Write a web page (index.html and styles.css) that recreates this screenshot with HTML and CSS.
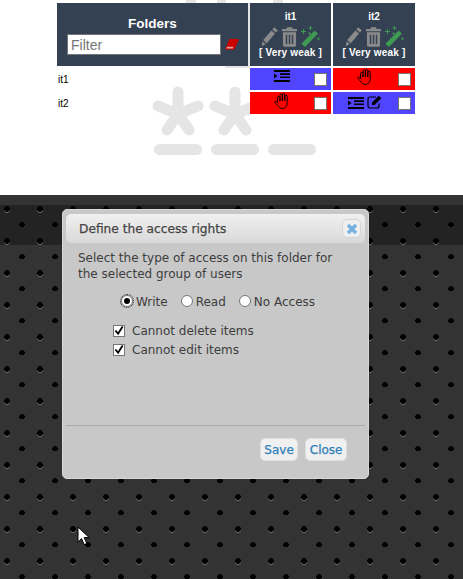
FILE: index.html
```html
<!DOCTYPE html>
<html lang="en">
<head>
<meta charset="utf-8">
<title>Define the access rights</title>
<link rel="stylesheet" href="styles.css">
</head>
<body>
<svg class="defs" width="0" height="0" aria-hidden="true">
  <symbol id="i-indent" viewBox="0 0 16 12">
    <path d="M0 0h16v2H0zM6 3.300h10v1.700H6zM6 6.400h10v1.700H6zM0 10h16v2H0zM0 3.500l3.600 2.600L0 8.600z" fill="#000"/>
  </symbol>
  <symbol id="i-hand" viewBox="0 0 16 16">
    <path d="M3.600 9.500V4.400a1.200 1.200 0 0 1 2.400 0V7.500M6 7.500V2.300a1.200 1.200 0 0 1 2.400 0V7.500M8.400 7.500V1.700a1.200 1.200 0 0 1 2.400 0V7.500M10.800 7.500V3.400a1.200 1.200 0 0 1 2.400 0v6.200c0 3.400-1.800 5.900-4.800 5.900-2.400 0-3.400-1.200-4.300-2.700L.9 9.600c-.6-1 .8-2.100 1.700-1.200l1 1.100" fill="none" stroke="#000" stroke-width=".95" stroke-linecap="round" stroke-linejoin="round"/>
  </symbol>
  <symbol id="i-edit" viewBox="0 0 16 14">
    <path d="M12 8.500V11a2 2 0 0 1-2 2H3a2 2 0 0 1-2-2V4a2 2 0 0 1 2-2h6" fill="none" stroke="#000" stroke-width="1.200"/>
    <path d="M5 7.500l6.800-6.800 2.600 2.600-6.800 6.800H5z" fill="#000"/>
  </symbol>
  <symbol id="i-pencil" viewBox="0 0 18 21">
    <path d="M13.200 1.200l3.600 3.200-1.900 2.200-3.600-3.200zM10.400 4.400l3.600 3.200-8.200 9.600-3.600-3.200zM1.500 15.200l3.200 2.800-4 2.200z" fill="#8a8a8a"/>
  </symbol>
  <symbol id="i-trash" viewBox="0 0 16 21">
    <path d="M5.500 0h5l1 2H16v2.400H0V2h4.500zM1 5.400h14V19a2 2 0 0 1-2 2H3a2 2 0 0 1-2-2zM4 8v10h1.600V8zM7.200 8v10h1.600V8zM10.400 8v10H12V8z" fill="#8a8a8a" fill-rule="evenodd"/>
  </symbol>
  <symbol id="i-wand" viewBox="0 0 20 21">
    <path d="M14.600 4.500l3.400 3L5 21l-3.600-3.200z" fill="#3f9a52"/>
    <path d="M3 3h1v2h2v1H4v2H3V6H1V5h2zM10 0h1v1.500h1.500v1H11V4h-1V2.500H8.500v-1H10zM18 11h.8v1.400h1.200v.8h-1.200v1.400H18v-1.400h-1.200v-.8H18zM9 6h.8v1h1v.8h-1v1H9v-1H8V7h1z" fill="#3f9a52"/>
  </symbol>
</svg>

<section class="rights">
  <svg class="watermark" width="463" height="195" viewBox="0 0 463 195" aria-hidden="true">
    <g fill="#e5e5e5">
      <rect x="186" y="0" width="10" height="4"/>
      <rect x="217" y="0" width="9" height="4"/>
      <rect x="273" y="0" width="10" height="4"/>
      <rect x="248" y="3" width="2" height="64"/>
      <rect x="225" y="66" width="25" height="2"/>
    </g>
    <g fill="none" stroke="#e5e5e5" stroke-linecap="round" stroke-width="11">
      <path d="M178 92v22M158 106l20 8 20-8M167 130l11-16 11 16"/>
      <path d="M235 92v22M215 106l20 8 20-8M224 130l11-16 11 16"/>
    </g>
    <g fill="#e5e5e5">
      <rect x="154" y="144" width="48" height="11" rx="5.500"/>
      <rect x="211" y="144" width="48" height="11" rx="5.500"/>
      <rect x="268" y="144" width="48" height="11" rx="5.500"/>
    </g>
  </svg>

  <div class="matrix">
    <div class="head head-main">
      <div class="head-title">Folders</div>
      <div class="filter-row">
        <input class="filter" type="text" placeholder="Filter">
        <svg class="eraser" width="14" height="11" viewBox="0 0 14 11" aria-hidden="true">
          <path d="M4.500 0H14L9.500 10.500H0z" fill="#cc0000"/>
          <path d="M2 7.800h6.400L7.800 9.400H1.400z" fill="#e8a0a0"/>
        </svg>
      </div>
    </div>
    <div class="head head-user">
      <div class="user-name">it1</div>
      <div class="user-icons">
        <svg class="ic-pencil"><use href="#i-pencil"/></svg>
        <svg class="ic-trash"><use href="#i-trash"/></svg>
        <svg class="ic-wand"><use href="#i-wand"/></svg>
      </div>
      <div class="strength">[ Very weak ]</div>
    </div>
    <div class="head head-user">
      <div class="user-name">it2</div>
      <div class="user-icons">
        <svg class="ic-pencil"><use href="#i-pencil"/></svg>
        <svg class="ic-trash"><use href="#i-trash"/></svg>
        <svg class="ic-wand"><use href="#i-wand"/></svg>
      </div>
      <div class="strength">[ Very weak ]</div>
    </div>

    <div class="row-label">it1</div>
    <div class="cell blue">
      <div class="cell-icons"><svg class="ic-indent"><use href="#i-indent"/></svg></div>
      <input class="cell-check" type="checkbox">
    </div>
    <div class="cell red">
      <div class="cell-icons"><svg class="ic-hand"><use href="#i-hand"/></svg></div>
      <input class="cell-check" type="checkbox">
    </div>

    <div class="row-label">it2</div>
    <div class="cell red">
      <div class="cell-icons"><svg class="ic-hand"><use href="#i-hand"/></svg></div>
      <input class="cell-check" type="checkbox">
    </div>
    <div class="cell blue">
      <div class="cell-icons low"><svg class="ic-indent"><use href="#i-indent"/></svg><svg class="ic-edit"><use href="#i-edit"/></svg></div>
      <input class="cell-check" type="checkbox">
    </div>
  </div>
</section>

<section class="overlay"></section>

<div class="modal" role="dialog">
  <div class="modal-bar">
    <span class="modal-title">Define the access rights</span>
    <span class="modal-x">
      <svg width="12" height="12" viewBox="0 0 12 12" aria-hidden="true"><path d="M2 2l8 8M10 2l-8 8" stroke="#74b2e2" stroke-width="3.400" fill="none"/></svg>
    </span>
  </div>
  <div class="modal-body">
    <p class="intro">Select the type of access on this folder for the selected group of users</p>
    <div class="radios">
      <label class="radio-item"><span class="radio on focus"></span>Write</label>
      <label class="radio-item"><span class="radio"></span>Read</label>
      <label class="radio-item"><span class="radio"></span>No Access</label>
    </div>
    <div class="checks">
      <label class="check-item"><span class="check"><svg width="11" height="11" viewBox="0 0 11 11" aria-hidden="true"><path d="M1.500 5.500l3 3.500 5-8" fill="none" stroke="#000" stroke-width="2"/></svg></span>Cannot delete items</label>
      <label class="check-item"><span class="check"><svg width="11" height="11" viewBox="0 0 11 11" aria-hidden="true"><path d="M1.500 5.500l3 3.500 5-8" fill="none" stroke="#000" stroke-width="2"/></svg></span>Cannot edit items</label>
    </div>
  </div>
  <div class="modal-foot">
    <button class="btn" type="button">Save</button>
    <button class="btn" type="button">Close</button>
  </div>
</div>

<svg class="pointer" width="14" height="20" viewBox="0 0 14 20" aria-hidden="true">
  <path d="M1 1v15l3.600-3.400 2.600 6 2.600-1.100-2.600-5.900h5z" fill="#fff" stroke="#000" stroke-width="1"/>
</svg>
</body>
</html>
```
FILE: styles.css
```css
* { box-sizing: border-box; }
html, body { margin: 0; padding: 0; }
body {
  width: 463px;
  height: 579px;
  overflow: hidden;
  position: relative;
  background: #fff;
  font-family: "Liberation Sans", Arial, sans-serif;
}
.defs { position: absolute; }

/* top: access matrix */
.rights {
  position: relative;
  height: 195px;
  padding: 3px 0 0 57px;
}
.watermark { position: absolute; left: 0; top: 0; }
.matrix {
  position: relative;
  display: grid;
  grid-template-columns: 191px 81px 82px;
  grid-template-rows: 63px 22px 22px;
  column-gap: 2px;
  row-gap: 2px;
}
.head { background: #344152; color: #fff; }
.head-main { padding: 14px 0 0 10px; }
.head-title {
  font-size: 13.500px;
  font-weight: bold;
  text-align: center;
  line-height: 14px;
  padding-right: 10px;
  margin-bottom: 3px;
}
.filter-row { display: flex; align-items: center; gap: 4px; }
.filter {
  width: 154px;
  height: 21px;
  border: 1px solid #767676;
  background: #fff;
  padding: 0 3px;
  font: 14px "Liberation Sans", Arial, sans-serif;
  border-radius: 0;
}
.filter::placeholder { color: #757575; opacity: 1; }
.head-user { display: flex; flex-direction: column; align-items: center; padding-top: 8px; }
.user-name { font-size: 10px; font-weight: bold; line-height: 11px; }
.user-icons { display: flex; align-items: center; height: 21px; margin-top: 4px; gap: 3px; }
.ic-pencil { width: 18px; height: 21px; }
.ic-trash { width: 15px; height: 20px; }
.ic-wand { width: 20px; height: 21px; }
.strength { font-size: 10px; font-weight: bold; line-height: 11px; letter-spacing: .2px; }
.row-label { font-size: 10px; line-height: 22px; padding: 1px 0 0 1px; color: #000; }
.cell { display: flex; align-items: center; padding-right: 4px; }
.blue { background: #5044ff; }
.red { background: #ff0000; }
.cell-icons { flex: 1; display: flex; justify-content: center; align-self: flex-start; padding: 1px 1px 0 0; gap: 3px; }
.cell-icons.low { padding-top: 4px; }
.ic-indent { width: 16px; height: 12px; margin-top: 1px; }
.ic-hand { width: 16px; height: 16px; }
.ic-edit { width: 16px; height: 14px; margin-top: -1px; }
.cell-check {
  appearance: none;
  -webkit-appearance: none;
  margin: 1px 0 0;
  width: 13px;
  height: 13px;
  background: #fff;
  border: 1.500px solid #767676;
}

/* bottom: dotted overlay */
.overlay {
  height: 384px;
  background-color: #333;
  background-image:
    radial-gradient(circle at 7px 14px, #000 2.600px, transparent 3.200px),
    radial-gradient(circle at 22px 30px, #000 2.600px, transparent 3.200px),
    radial-gradient(circle at 7px 15px, #6a6a6a 2.600px, transparent 3.200px),
    radial-gradient(circle at 22px 31px, #6a6a6a 2.600px, transparent 3.200px),
    linear-gradient(#232323, #232323);
  background-size: 33px 32px, 33px 32px, 33px 32px, 33px 32px, 100% 40px;
  background-position: 0 0, 0 0, 0 0, 0 0, 0 10px;
  background-repeat: repeat, repeat, repeat, repeat, no-repeat;
}

/* dialog */
.modal {
  position: absolute;
  left: 62px;
  top: 209px;
  width: 307px;
  height: 270px;
  background: #c8c8c8;
  border: 1px solid #d8d8d8;
  border-radius: 5px;
  padding: 4px 3px 0;
  display: flex;
  flex-direction: column;
  font-family: "DejaVu Sans", sans-serif;
  font-size: 12px;
  color: #3d3d3d;
}
.modal-bar {
  height: 29px;
  flex: none;
  background: linear-gradient(#f0f0f0, #d9d9d9);
  border-radius: 5px;
  display: flex;
  align-items: center;
  justify-content: space-between;
  padding: 0 4px 0 13px;
}
.modal-title { font-size: 12.200px; color: #444; -webkit-text-stroke: .25px #444; }
.modal-x {
  width: 19px;
  height: 19px;
  background: #efefef;
  border: 1px solid #d4d4d4;
  border-radius: 5px;
  display: flex;
  align-items: center;
  justify-content: center;
}
.modal-body { flex: 1; padding: 7px 12px 0 12px; }
.intro { margin: 0; line-height: 16px; }
.radios {
  display: flex;
  padding-left: 43px;
  gap: 13px;
  margin-top: 12px;
  line-height: 16px;
}
.radio-item { display: flex; align-items: center; gap: 3px; }
.radio {
  width: 12px;
  height: 12px;
  border-radius: 50%;
  background: #fff;
  border: 1px solid #767676;
  position: relative;
  margin-top: -2px;
}
.radio.on::after {
  content: "";
  position: absolute;
  left: 2px;
  top: 2px;
  width: 6px;
  height: 6px;
  background: #000;
  border-radius: 50%;
}
.radio.focus { outline: 1px dotted #222; }
.checks { margin-top: 11px; padding-left: 35px; }
.check-item { display: flex; align-items: center; gap: 7px; height: 19px; }
.check {
  width: 12px;
  height: 12px;
  background: #fff;
  border: 1px solid #767676;
  display: flex;
  align-items: center;
  justify-content: center;
}
.modal-foot {
  flex: none;
  height: 53px;
  border-top: 1px solid #aaa;
  display: flex;
  justify-content: flex-end;
  gap: 7px;
  padding: 12px 18px 0 0;
}
.btn {
  height: 23px;
  padding: 0 3.500px;
  background: #f0f0f0;
  border: 1px solid #dedede;
  border-radius: 5px;
  font-family: "DejaVu Sans", sans-serif;
  font-size: 12px;
  -webkit-text-stroke: .25px #2e7fb8;
  color: #2e7fb8;
}
.pointer { position: absolute; left: 77px; top: 526px; }
```
